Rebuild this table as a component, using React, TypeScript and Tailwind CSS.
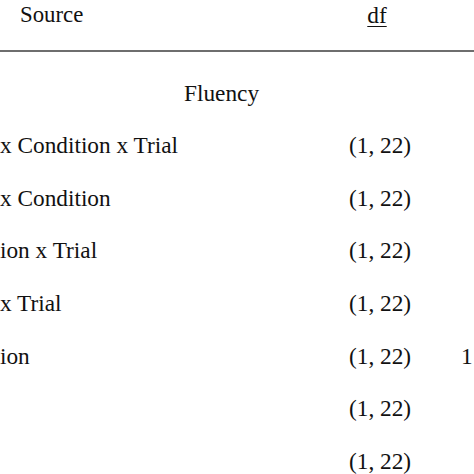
import React from 'react';

type Row = { source: string; df: string; tail?: string };

const rows: Row[] = [
  { source: 'x Condition x Trial', df: '(1, 22)', tail: '0' },
  { source: 'x Condition', df: '(1, 22)' },
  { source: 'ion x Trial', df: '(1, 22)' },
  { source: 'x Trial', df: '(1, 22)' },
  { source: 'ion', df: '(1, 22)', tail: '1' },
  { source: '', df: '(1, 22)' },
  { source: '', df: '(1, 22)' },
];

const App: React.FC = () => {
  return (
    <div
      className="w-[474px] h-[474px] overflow-hidden bg-white text-[#111] text-[23.3px]"
      style={{ fontFamily: '"Liberation Serif", "Times New Roman", serif' }}
    >
      {/* Header */}
      <div className="flex h-[30px] leading-[30px] whitespace-nowrap">
        <div className="w-[350px] shrink-0 pl-[20px] text-[22.8px]">Source</div>
        <div className="w-[60px] shrink-0 text-center pr-[6px]">
          <span className="underline underline-offset-[3px] decoration-[1px]">df</span>
        </div>
      </div>
      <div className="mt-[20px] h-[2px] w-full bg-[#6e6e6e]" />

      {/* Section label */}
      <div className="pt-[15px] leading-[52px] pl-[184px] whitespace-nowrap">Fluency</div>

      {/* Data rows */}
      {rows.map((row, i) => (
        <div key={i} className="flex h-[52.67px] leading-[52.67px] whitespace-nowrap">
          <div className="w-[349px] shrink-0">{row.source}</div>
          <div className="w-[62px] shrink-0 text-center">{row.df}</div>
          {row.tail && (
            <div className={row.tail === '0' ? 'ml-[63px] shrink-0' : 'ml-[50px] shrink-0'}>
              {row.tail}
            </div>
          )}
        </div>
      ))}
    </div>
  );
};

export default App;
